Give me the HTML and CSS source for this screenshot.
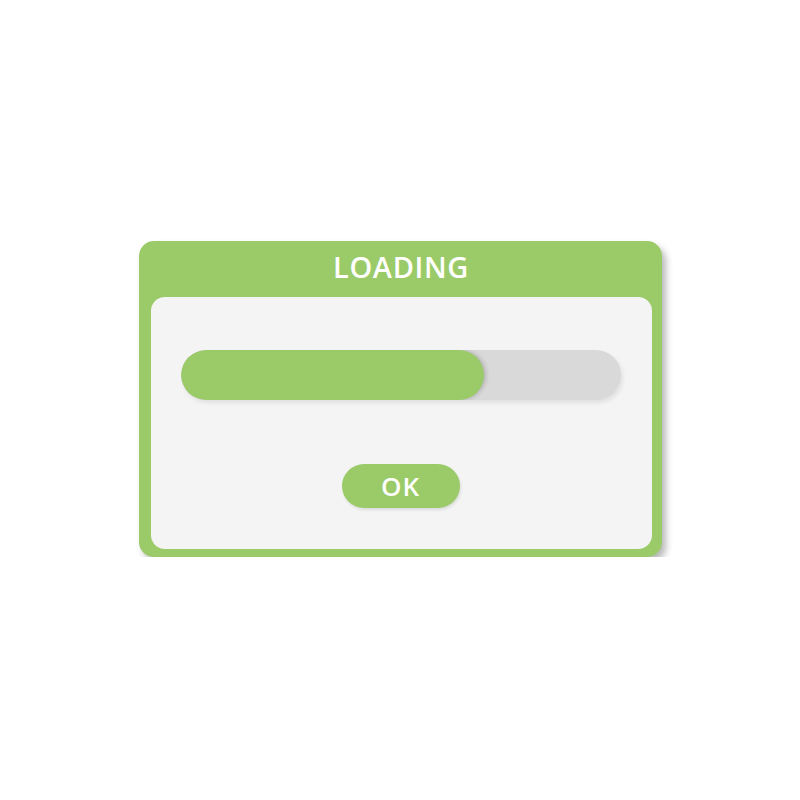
FILE: index.html
```html
<!DOCTYPE html>
<html lang="en">
<head>
<meta charset="utf-8">
<title>Loading</title>
<link rel="stylesheet" href="styles.css">
</head>
<body>
  <div class="dialog">
    <div class="dialog-title">LOADING</div>
    <div class="dialog-body">
      <div class="progress">
        <div class="progress-fill" style="width: 69%"></div>
      </div>
      <button class="ok-button" type="button">OK</button>
    </div>
  </div>
</body>
</html>
```
FILE: styles.css
```css
html, body {
  margin: 0;
  background: #ffffff;
}

body {
  padding-top: 241px;
  font-family: "Open Sans", "Noto Sans", sans-serif;
}

.dialog {
  width: 523px;
  margin: 0 auto;
  box-sizing: border-box;
  background: #9bcb68;
  border-radius: 15px;
  padding: 0 10px 8px 12px;
  box-shadow: 4px 5px 7px rgba(0, 0, 0, 0.28);
}

.dialog-title {
  height: 56px;
  line-height: 52px;
  text-align: center;
  color: #ffffff;
  font-size: 29px;
  font-weight: 600;
  letter-spacing: 0.6px;
}

.dialog-body {
  height: 252px;
  box-sizing: border-box;
  background: #f4f4f4;
  border-radius: 14px;
  padding: 53px 31px 0 30px;
  display: flex;
  flex-direction: column;
  align-items: center;
}

.progress {
  align-self: stretch;
  height: 50px;
  border-radius: 25px;
  background: #d9d9d9;
  box-shadow: 2px 3px 4px rgba(0, 0, 0, 0.08);
  overflow: hidden;
  display: flex;
}

.progress-fill {
  height: 100%;
  background: #9bcb68;
  border-radius: 25px;
  box-shadow: 2px 0 4px rgba(0, 0, 0, 0.18);
}

.ok-button {
  margin-top: 64px;
  width: 118px;
  height: 44px;
  border: none;
  border-radius: 22px;
  background: #9bcb68;
  color: #ffffff;
  font-family: "Open Sans", "Noto Sans", sans-serif;
  font-size: 26px;
  font-weight: 600;
  letter-spacing: 1px;
  line-height: 44px;
  padding: 0;
  box-shadow: 1px 2px 3px rgba(0, 0, 0, 0.1);
}
```
